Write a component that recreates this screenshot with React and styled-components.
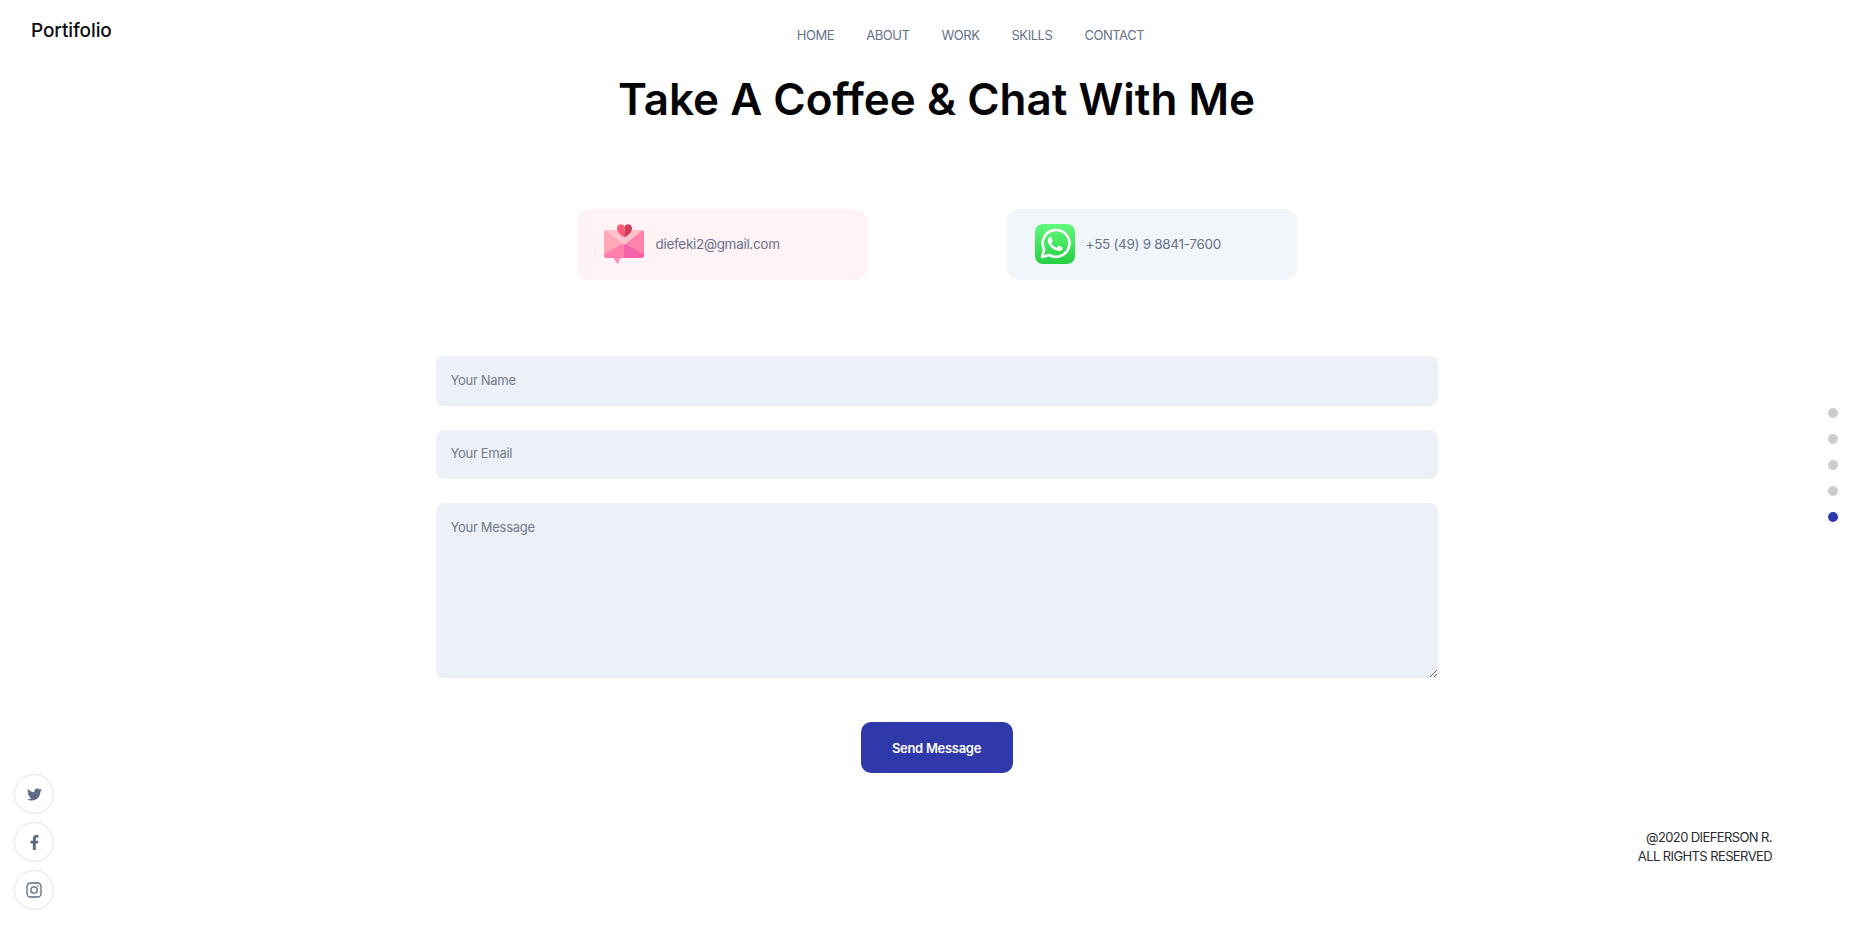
import React from 'react';
import styled, { createGlobalStyle } from 'styled-components';
import { FaTwitter, FaFacebookF } from 'react-icons/fa';

const GlobalStyle = createGlobalStyle`
  * { box-sizing: border-box; }
  html, body { margin: 0; padding: 0; background: #fff; }
  body { font-family: Inter, "Noto Sans", sans-serif; overflow: hidden; }
`;

const Page = styled.div`
  position: relative;
  height: 926px;
  overflow: hidden;
`;

const Logo = styled.div`
  position: absolute;
  top: 19px;
  left: 31px;
  font-size: 19px;
  line-height: 24px;
  font-weight: 500;
  letter-spacing: -0.1px;
  color: #0b0b0f;
`;

const Nav = styled.nav`
  display: flex;
  justify-content: center;
  gap: 32px;
  padding: 26px 0 0 82px;
`;

const NavLink = styled.a`
  font-size: 13px;
  line-height: 18px;
  letter-spacing: -0.45px;
  color: #66708a;
`;

const Content = styled.main`
  padding-left: 14px;
`;

const Title = styled.h1`
  margin: 28px 0 0;
  text-align: center;
  font-size: 44px;
  line-height: 54px;
  font-weight: 600;
  letter-spacing: 0;
  color: #050507;
`;

const Cards = styled.div`
  display: flex;
  justify-content: center;
  gap: 140px;
  margin-top: 83px;
`;

const Card = styled.div`
  display: flex;
  align-items: center;
  gap: ${(p) => p.$gap}px;
  width: 290px;
  height: 71px;
  padding: 0 0 1px ${(p) => p.$inset}px;
  border-radius: 12px;
  background: ${(p) => p.$bg};
  font-size: 13.5px;
  letter-spacing: -0.3px;
  color: #69718a;
`;

const Form = styled.form`
  display: flex;
  flex-direction: column;
  align-items: center;
  gap: 24px;
  width: 1002px;
  margin: 76px auto 0;
`;

const Input = styled.input`
  display: block;
  width: 100%;
  height: 49.5px;
  padding: 0 15px 2px;
  border: 0;
  border-radius: 8px;
  outline: 0;
  background: #ecf1f8;
  font-family: inherit;
  font-size: 13px;
  letter-spacing: -0.3px;
  &::placeholder { color: #757b88; opacity: 1; }
`;

const TextArea = styled.textarea`
  display: block;
  width: 100%;
  height: 175px;
  padding: 16px 15px;
  border: 0;
  border-radius: 8px;
  outline: 0;
  background: #ecf1f8;
  font-family: inherit;
  font-size: 13px;
  letter-spacing: -0.3px;
  &::placeholder { color: #757b88; opacity: 1; }
`;

const SendButton = styled.button`
  width: 152px;
  height: 51px;
  margin-top: 20px;
  border: 0;
  border-radius: 10px;
  background: #2f39a9;
  color: #fff;
  font-family: inherit;
  font-size: 13px;
  font-weight: 600;
  letter-spacing: -0.3px;
`;

const Dots = styled.div`
  position: absolute;
  top: 408px;
  right: 21px;
  display: flex;
  flex-direction: column;
  gap: 16px;
`;

const Dot = styled.span`
  width: 10px;
  height: 10px;
  border-radius: 50%;
  background: ${(p) => (p.$active ? '#2f39a9' : '#cccccc')};
`;

const Socials = styled.div`
  position: absolute;
  left: 14px;
  bottom: 16px;
  display: flex;
  flex-direction: column;
  gap: 8px;
`;

const SocialLink = styled.a`
  display: flex;
  align-items: center;
  justify-content: center;
  width: 40px;
  height: 40px;
  border: 1px solid #e3e3e6;
  border-radius: 50%;
  color: #5d6a83;
  font-size: 15px;
`;

const Copyright = styled.div`
  position: absolute;
  right: 87px;
  top: 828px;
  text-align: right;
  font-size: 13px;
  line-height: 19px;
  letter-spacing: -0.6px;
  color: #2a2a30;
`;

const MailIcon = () => (
  <svg width="40" height="40" viewBox="0 0 40 40">
    <path d="M9 33l8 0-3 6.500c-.3.500-.7.500-1.100.100z" fill="#ff8fb5" />
    <rect x="0" y="6" width="40" height="28" rx="3" fill="#ffa6b7" />
    <path d="M3 34a3 3 0 0 1-3-3v-1l20-11v15z" fill="#ff7fad" />
    <path d="M37 34a3 3 0 0 0 3-3v-1l-20-11v15z" fill="#f562a8" />
    <path d="M40 9v21l-20-11V6h17a3 3 0 0 1 3 3z" fill="#ff82ad" />
    <path d="M2 6.800A3 3 0 0 1 3 6h34a3 3 0 0 1 1 .800L20 21z" fill="#ffc2cc" />
    <path d="M20.500 2.500C18.500-1 13-.5 13 4.500c0 3.500 3.500 6.500 7.500 9z" fill="#ff5a75" />
    <path d="M20.500 2.500C22.500-1 28-.5 28 4.500c0 3.500-3.500 6.500-7.500 9z" fill="#cf3d58" />
  </svg>
);

const WhatsAppIcon = () => (
  <svg width="40" height="40" viewBox="0 0 40 40">
    <defs>
      <linearGradient id="wa" x1="0" y1="0" x2="0" y2="1">
        <stop offset="0" stopColor="#62f97f" />
        <stop offset="1" stopColor="#26cf42" />
      </linearGradient>
    </defs>
    <rect width="40" height="40" rx="8" fill="url(#wa)" />
    <path
      d="M7 33l2.200-7.400A13.400 13.400 0 1 1 14.400 31z"
      fill="none"
      stroke="#fff"
      strokeWidth="2.600"
      strokeLinejoin="round"
    />
    <path
      d="M16 12.500c-.5 0-1.200.2-1.800.9-.6.700-1.400 1.800-1.400 3.500 0 1.800 1.300 3.600 1.500 3.800.2.300 2.500 4 6.200 5.400 3.100 1.200 3.700 1 4.300.9.600-.1 2.200-.9 2.500-1.700.3-.8.300-1.500.2-1.700-.1-.2-.4-.3-.7-.5l-2.500-1.200c-.4-.1-.6-.2-.9.200l-1.200 1.400c-.2.300-.5.300-.8.100-.4-.2-1.500-.5-2.900-1.800-1.100-.9-1.800-2.100-2-2.400-.2-.4 0-.5.200-.7l.5-.6c.2-.2.300-.4.400-.6.100-.3.100-.5 0-.6l-1.200-2.800c-.3-.7-.6-.6-.9-.6z"
      fill="#fff"
    />
  </svg>
);

const InstagramIcon = () => (
  <svg width="16" height="16" viewBox="0 0 16 16" fill="none" stroke="currentColor" strokeWidth="1.300">
    <rect x="1" y="1" width="14" height="14" rx="3.500" />
    <circle cx="8" cy="8" r="3.200" />
    <circle cx="12" cy="4" r=".8" fill="currentColor" stroke="none" />
  </svg>
);

const links = ['HOME', 'ABOUT', 'WORK', 'SKILLS', 'CONTACT'];

const App = () => (
  <Page>
    <GlobalStyle />
    <Logo>Portifolio</Logo>
    <Nav>
      {links.map((link) => (
        <NavLink key={link}>{link}</NavLink>
      ))}
    </Nav>
    <Content>
      <Title>Take A Coffee &amp; Chat With Me</Title>
      <Cards>
        <Card $bg="#fff3f5" $inset={27} $gap={12}>
          <MailIcon />
          diefeki2@gmail.com
        </Card>
        <Card $bg="#f1f6fb" $inset={28} $gap={11}>
          <WhatsAppIcon />
          +55 (49) 9 8841-7600
        </Card>
      </Cards>
      <Form>
        <Input placeholder="Your Name" />
        <Input placeholder="Your Email" />
        <TextArea placeholder="Your Message" />
        <SendButton type="button">Send Message</SendButton>
      </Form>
    </Content>
    <Dots>
      {[0, 1, 2, 3, 4].map((i) => (
        <Dot key={i} $active={i === 4} />
      ))}
    </Dots>
    <Socials>
      <SocialLink><FaTwitter /></SocialLink>
      <SocialLink><FaFacebookF /></SocialLink>
      <SocialLink><InstagramIcon /></SocialLink>
    </Socials>
    <Copyright>
      @2020 DIEFERSON R.
      <br />
      ALL RIGHTS RESERVED
    </Copyright>
  </Page>
);

export default App;
